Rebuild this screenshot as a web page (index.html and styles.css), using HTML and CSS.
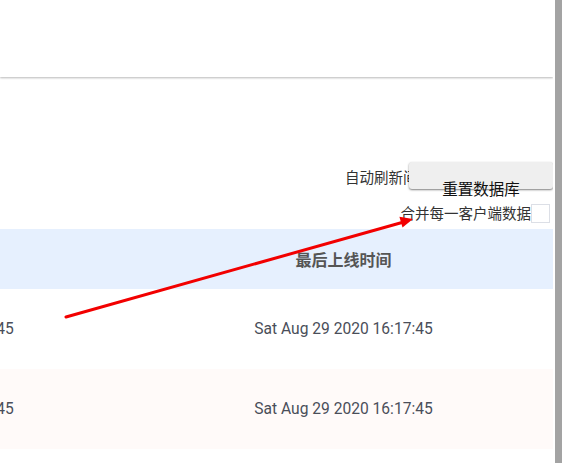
FILE: index.html
```html
<!DOCTYPE html>
<html lang="zh">
<head>
<meta charset="utf-8">
<link rel="stylesheet" href="styles.css">
</head>
<body>
<div class="page">
  <div class="content">
    <header class="topbar"></header>
    <div class="toolbar">
      <div class="row row-refresh">
        <span class="label">自动刷新间隔</span>
        <button class="btn-reset"><span>重置数据库</span></button>
      </div>
      <div class="row row-merge">
        <span class="label">合并每一客户端数据</span>
        <span class="checkbox"></span>
      </div>
    </div>
    <div class="table-wrap">
      <table class="grid">
        <thead>
          <tr><th></th><th>最后上线时间</th></tr>
        </thead>
        <tbody>
          <tr><td>Sat Aug 29 2020 16:17:45</td><td>Sat Aug 29 2020 16:17:45</td></tr>
          <tr class="alt"><td>Sat Aug 29 2020 16:17:45</td><td>Sat Aug 29 2020 16:17:45</td></tr>
          <tr><td></td><td></td></tr>
        </tbody>
      </table>
    </div>
  </div>
  <div class="scrollbar"></div>
</div>
<svg class="arrow" width="562" height="463" viewBox="0 0 562 463">
  <line x1="66" y1="317" x2="402" y2="222.5" stroke="#f20000" stroke-width="3" stroke-linecap="round"/>
  <polygon points="413,219 402.5,227.6 399.4,216.8" fill="#f20000"/>
</svg>
</body>
</html>
```

FILE: styles.css
```css
html, body {
  margin: 0;
  padding: 0;
  background: #fff;
}
body {
  font-family: "Noto Sans CJK SC", "Noto Sans", sans-serif;
  overflow: hidden;
  height: 463px;
}
.page {
  display: flex;
  height: 463px;
}
.content {
  width: 553px;
  flex: none;
  display: flex;
  flex-direction: column;
  overflow: hidden;
}
.scrollbar {
  width: 7px;
  margin-left: 2px;
  background: #a3a3a3;
  flex: none;
}
.topbar {
  height: 77px;
  flex: none;
  background: #fff;
  box-shadow: 0 1px 2px rgba(0, 0, 0, 0.28);
  position: relative;
  z-index: 1;
}
.toolbar {
  display: flex;
  flex-direction: column;
  align-items: flex-end;
  padding-top: 90px;
  padding-bottom: 6px;
  gap: 16px;
  color: #333;
  font-size: 14.5px;
}
.row {
  display: flex;
  align-items: center;
  height: 20px;
  line-height: 20px;
}
.row-refresh {
  position: relative;
  width: 100%;
  justify-content: flex-end;
  box-sizing: border-box;
  padding-right: 121px;
}
.btn-reset {
  position: absolute;
  right: 0;
  top: -5px;
  width: 144px;
  height: 27px;
  padding: 18px 0 0;
  margin: 0;
  border: none;
  border-radius: 3px;
  background: #efefef;
  box-shadow: 0 1px 2px rgba(0, 0, 0, 0.5);
  font-family: "Noto Sans CJK SC", sans-serif;
  font-size: 15.5px;
  line-height: 16px;
  color: #111;
  overflow: visible;
  display: block;
  text-align: center;
}
.row-merge {
  padding-right: 3px;
}
.checkbox {
  width: 17px;
  height: 17px;
  border: 1px solid #dcdfe6;
  background: #fff;
  box-sizing: content-box;
}
.table-wrap {
  flex: 1;
  overflow: hidden;
}
.grid {
  border-collapse: collapse;
  margin-left: -285px;
  width: 838px;
  table-layout: fixed;
}
.grid th, .grid td {
  width: 419px;
  padding: 0;
  text-align: center;
}
.grid th {
  height: 60px;
  background: #e6f0fe;
  font-family: "Noto Sans CJK SC", sans-serif;
  font-weight: 700;
  font-size: 16px;
  color: #555;
}
.grid td {
  height: 80px;
  font-family: Roboto, "Open Sans", sans-serif;
  font-size: 15.6px;
  color: #4a4e59;
}
.grid tr.alt td {
  background: #fffaf9;
}
.arrow {
  position: absolute;
  left: 0;
  top: 0;
  pointer-events: none;
}
```
